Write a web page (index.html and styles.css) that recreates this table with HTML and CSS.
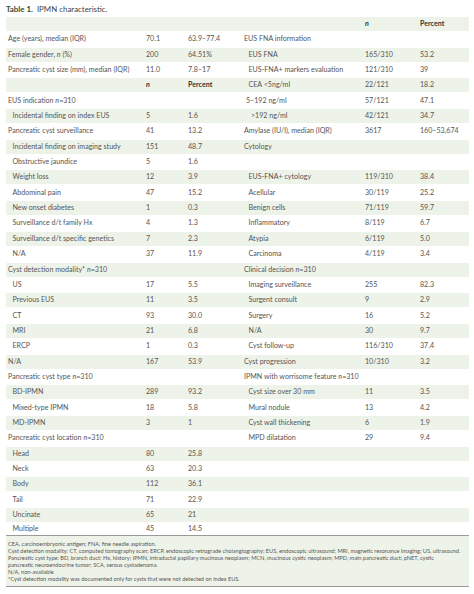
FILE: index.html
```html
<!DOCTYPE html>
<html>
<head>
<meta charset="utf-8">
<link rel="stylesheet" href="styles.css">
</head>
<body>
<div class="page">
  <div class="title"><span class="tnum">Table 1.</span> IPMN characteristic.</div>
  <div class="table">
    <div class="row g"><span></span><span></span><span></span><span></span><span class="h"><i>n</i></span><span class="h">Percent</span></div>
    <div class="row"><span>Age (years), median (IQR)</span><span>70.1</span><span>63.9–77.4</span><span>EUS FNA information</span><span></span><span></span></div>
    <div class="row g"><span>Female gender, <i>n</i> (%)</span><span>200</span><span>64.51%</span><span class="in">EUS FNA</span><span>165/310</span><span>53.2</span></div>
    <div class="row"><span>Pancreatic cyst size (mm), median (IQR)</span><span>11.0</span><span>7.8–17</span><span class="in">EUS-FNA+ markers evaluation</span><span>121/310</span><span>39</span></div>
    <div class="row g"><span></span><span class="h"><i>n</i></span><span class="h">Percent</span><span class="in">CEA &lt;5ng/ml</span><span>22/121</span><span>18.2</span></div>
    <div class="row"><span>EUS indication <i>n</i>=310</span><span></span><span></span><span class="in2">5–192 ng/ml</span><span>57/121</span><span>47.1</span></div>
    <div class="row g"><span class="in">Incidental finding on index EUS</span><span>5</span><span>1.6</span><span class="in3">&gt;192 ng/ml</span><span>42/121</span><span>34.7</span></div>
    <div class="row"><span>Pancreatic cyst surveillance</span><span>41</span><span>13.2</span><span>Amylase (IU/l), median (IQR)</span><span>3617</span><span>160–53,674</span></div>
    <div class="row g"><span class="in">Incidental finding on imaging study</span><span>151</span><span>48.7</span><span>Cytology</span><span></span><span></span></div>
    <div class="row"><span class="in">Obstructive jaundice</span><span>5</span><span>1.6</span><span></span><span></span><span></span></div>
    <div class="row g"><span class="in">Weight loss</span><span>12</span><span>3.9</span><span class="in">EUS-FNA+ cytology</span><span>119/310</span><span>38.4</span></div>
    <div class="row"><span class="in">Abdominal pain</span><span>47</span><span>15.2</span><span class="in">Acellular</span><span>30/119</span><span>25.2</span></div>
    <div class="row g"><span class="in">New onset diabetes</span><span>1</span><span>0.3</span><span class="in">Benign cells</span><span>71/119</span><span>59.7</span></div>
    <div class="row"><span class="in">Surveillance d/t family Hx</span><span>4</span><span>1.3</span><span class="in">Inflammatory</span><span>8/119</span><span>6.7</span></div>
    <div class="row g"><span class="in">Surveillance d/t specific genetics</span><span>7</span><span>2.3</span><span class="in">Atypia</span><span>6/119</span><span>5.0</span></div>
    <div class="row"><span class="in">N/A</span><span>37</span><span>11.9</span><span class="in">Carcinoma</span><span>4/119</span><span>3.4</span></div>
    <div class="row g"><span>Cyst detection modality* <i>n</i>=310</span><span></span><span></span><span>Clinical decision <i>n</i>=310</span><span></span><span></span></div>
    <div class="row"><span class="in">US</span><span>17</span><span>5.5</span><span class="in">Imaging surveillance</span><span>255</span><span>82.3</span></div>
    <div class="row g"><span class="in">Previous EUS</span><span>11</span><span>3.5</span><span class="in">Surgent consult</span><span>9</span><span>2.9</span></div>
    <div class="row"><span class="in">CT</span><span>93</span><span>30.0</span><span class="in">Surgery</span><span>16</span><span>5.2</span></div>
    <div class="row g"><span class="in">MRI</span><span>21</span><span>6.8</span><span class="in">N/A</span><span>30</span><span>9.7</span></div>
    <div class="row"><span class="in">ERCP</span><span>1</span><span>0.3</span><span class="in">Cyst follow-up</span><span>116/310</span><span>37.4</span></div>
    <div class="row g"><span>N/A</span><span>167</span><span>53.9</span><span>Cyst progression</span><span>10/310</span><span>3.2</span></div>
    <div class="row"><span>Pancreatic cyst type <i>n</i>=310</span><span></span><span></span><span>IPMN with worrisome feature <i>n</i>=310</span><span></span><span></span></div>
    <div class="row g"><span class="in">BD-IPMN</span><span>289</span><span>93.2</span><span class="in">Cyst size over 30 mm</span><span>11</span><span>3.5</span></div>
    <div class="row"><span class="in">Mixed-type IPMN</span><span>18</span><span>5.8</span><span class="in">Mural nodule</span><span>13</span><span>4.2</span></div>
    <div class="row g"><span class="in">MD-IPMN</span><span>3</span><span>1</span><span class="in">Cyst wall thickening</span><span>6</span><span>1.9</span></div>
    <div class="row"><span>Pancreatic cyst location <i>n</i>=310</span><span></span><span></span><span class="in">MPD dilatation</span><span>29</span><span>9.4</span></div>
    <div class="row g"><span class="in">Head</span><span>80</span><span>25.8</span><span></span><span></span><span></span></div>
    <div class="row"><span class="in">Neck</span><span>63</span><span>20.3</span><span></span><span></span><span></span></div>
    <div class="row g"><span class="in">Body</span><span>112</span><span>36.1</span><span></span><span></span><span></span></div>
    <div class="row"><span class="in">Tail</span><span>71</span><span>22.9</span><span></span><span></span><span></span></div>
    <div class="row g"><span class="in">Uncinate</span><span>65</span><span>21</span><span></span><span></span><span></span></div>
    <div class="row last"><span class="in">Multiple</span><span>45</span><span>14.5</span><span></span><span></span><span></span></div>
  </div>
  <div class="foot">
    <div>CEA, carcinoembryonic antigen; FNA, fine needle aspiration.</div>
    <div>Cyst detection modality: CT, computed tomography scan; ERCP, endoscopic retrograde cholangiography; EUS, endoscopic ultrasound; MRI, magnetic resonance imaging; US, ultrasound.</div>
    <div>Pancreatic cyst type: BD, branch duct; Hx, history; IPMN, intraductal papillary mucinous neoplasm; MCN, mucinous cystic neoplasm; MPD, main pancreatic duct; pNET, cystic</div>
    <div>pancreatic neuroendocrine tumor; SCA, serous cystadenoma.</div>
    <div>N/A, non-available</div>
    <div>*Cyst detection modality was documented only for cysts that were not detected on index EUS.</div>
  </div>
</div>
</body>
</html>
```
FILE: styles.css
```css
html, body {
  margin: 0;
  padding: 0;
  background: #ffffff;
}
.page {
  width: 463px;
  padding: 0 5px 0 6px;
  font-family: Lato, "Open Sans", sans-serif;
  color: #555555;
}
.title {
  height: 10px;
  line-height: 10px;
  margin-top: 4px;
  margin-bottom: 3px;
  font-size: 7.9px;
  color: #444444;
  white-space: nowrap;
}
.tnum {
  font-weight: 700;
  color: #2e4a3c;
  margin-right: 2px;
}
.table {
  display: flex;
  flex-direction: column;
  gap: 1.35px;
}
.row {
  display: grid;
  grid-template-columns: 138px 42px 56px 121px 55px 51px;
  height: 14px;
  line-height: 14px;
  font-size: 7.1px;
  white-space: nowrap;
}
.row.g {
  background: #eef3e9;
}
.row.last {
  height: 12px;
  line-height: 12px;
}
.row span {
  padding-left: 2px;
  overflow: visible;
}
.row span.in {
  padding-left: 6.5px;
}
.row span.in2 {
  padding-left: 4px;
}
.row span.in3 {
  padding-left: 9px;
}
.row span.h {
  font-weight: 700;
  color: #333333;
}
.foot {
  border-top: 1.5px solid #9a9a9a;
  border-bottom: 1.5px solid #9a9a9a;
  background: #eef3e9;
  padding: 4px 2px 4px 2px;
  font-size: 5.62px;
  line-height: 7px;
  color: #555555;
  white-space: nowrap;
}
```
